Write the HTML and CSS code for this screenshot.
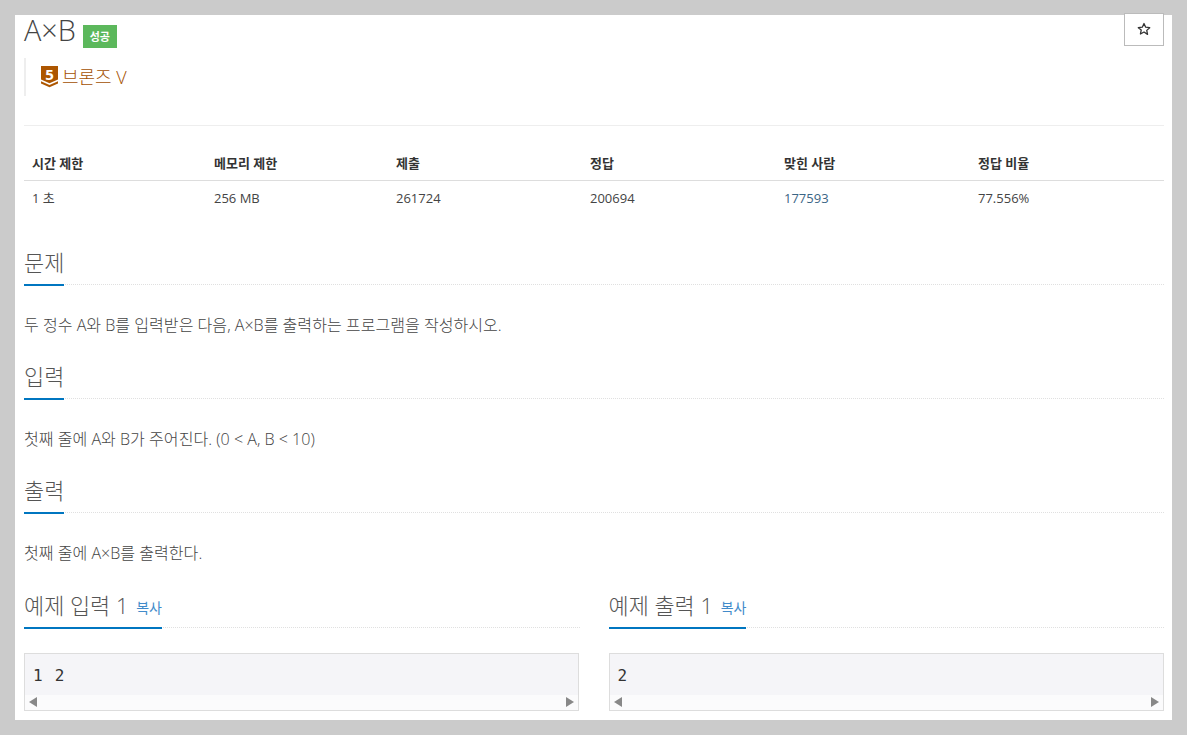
FILE: index.html
```html
<!DOCTYPE html>
<html lang="ko">
<head>
<meta charset="utf-8">
<title>A×B</title>
<link rel="stylesheet" href="styles.css">
</head>
<body>
<main class="sheet">
  <header class="title-row">
    <div class="title-group">
      <h1 class="title">A×B</h1>
      <span class="badge">성공</span>
    </div>
    <button class="star-btn" type="button" aria-label="star">
      <svg class="star" width="14" height="14" viewBox="0 0 24 24"><path d="M12 2.600l2.900 6.300 6.900.8-5.100 4.700 1.400 6.800L12 17.100l-6.100 3.400 1.400-6.800L2.200 9.700l6.900-.8z" fill="none" stroke="#333" stroke-width="2.200" stroke-linejoin="round"/></svg>
    </button>
  </header>
  <blockquote class="tier">
    <svg class="tier-icon" width="17" height="22" viewBox="0 0 17 22"><path d="M0 0h17v13.500l-8.500 3.700L0 13.500z" fill="#ad5600"/><path d="M0 15.200l8.500 3.700 8.500-3.700v2.400L8.500 21.300 0 17.600z" fill="#ad5600"/></svg>
    <span class="tier-num">5</span>
    <span class="tier-name">브론즈 V</span>
  </blockquote>
  <table class="info">
    <thead>
      <tr>
        <th class="c-narrow">시간 제한</th>
        <th class="c-narrow">메모리 제한</th>
        <th class="c-wide">제출</th>
        <th class="c-wide">정답</th>
        <th class="c-wide">맞힌 사람</th>
        <th class="c-wide">정답 비율</th>
      </tr>
    </thead>
    <tbody>
      <tr>
        <td>1 초</td>
        <td>256 MB</td>
        <td>261724</td>
        <td>200694</td>
        <td><a class="link" href="#">177593</a></td>
        <td>77.556%</td>
      </tr>
    </tbody>
  </table>
  <section class="sec">
    <div class="head"><h2 class="head-text">문제</h2></div>
    <p class="body-text">두 정수 A와 B를 입력받은 다음, A×B를 출력하는 프로그램을 작성하시오.</p>
  </section>
  <section class="sec">
    <div class="head"><h2 class="head-text">입력</h2></div>
    <p class="body-text">첫째 줄에 A와 B가 주어진다. (0 &lt; A, B &lt; 10)</p>
  </section>
  <section class="sec">
    <div class="head"><h2 class="head-text">출력</h2></div>
    <p class="body-text">첫째 줄에 A×B를 출력한다.</p>
  </section>
  <div class="samples">
    <section>
      <div class="head"><h2 class="head-text">예제 입력 1 <a class="copy" href="#">복사</a></h2></div>
      <div class="code-box">
        <pre class="code">1 2</pre>
        <div class="scroll"><span class="arrow-l"></span><span class="arrow-r"></span></div>
      </div>
    </section>
    <section>
      <div class="head"><h2 class="head-text">예제 출력 1 <a class="copy" href="#">복사</a></h2></div>
      <div class="code-box">
        <pre class="code">2</pre>
        <div class="scroll"><span class="arrow-l"></span><span class="arrow-r"></span></div>
      </div>
    </section>
  </div>
</main>
</body>
</html>
```

FILE: styles.css
```css
* { box-sizing: border-box; }
html, body { height: 100%; }
body {
  margin: 0;
  padding: 15px;
  background: #cbcbcb;
  overflow: hidden;
  font-family: "Open Sans", "Noto Sans CJK KR", sans-serif;
  color: #555;
  font-size: 16px;
}
.sheet {
  background: #fff;
  height: 705px;
  padding: 0 8px 0 9px;
}
.title-row {
  display: flex;
  justify-content: space-between;
  align-items: flex-start;
  height: 43px;
}
.title-group { display: flex; align-items: flex-start; }
.title {
  margin: -2px 0 0;
  font-size: 28.800px;
  font-weight: 300;
  line-height: 34px;
  color: #444;
}
.badge {
  margin: 10px 0 0 7px;
  width: 34px;
  height: 23px;
  background: #5cb85c;
  color: #fff;
  font-size: 11px;
  font-weight: 700;
  line-height: 23px;
  text-align: center;
}
.star-btn {
  margin-top: -2px;
  width: 40px;
  height: 33px;
  padding: 0 0 2px;
  display: flex;
  align-items: center;
  justify-content: center;
  background: #fff;
  border: 1px solid #bbb;
}
.tier {
  position: relative;
  margin: 0;
  height: 38px;
  padding-left: 15px;
  display: flex;
  align-items: center;
  gap: 4px;
  border-left: 2px solid #eee;
}
.tier-icon { flex: none; }
.tier-num {
  position: absolute;
  left: 15px;
  width: 17px;
  top: 9px;
  text-align: center;
  color: #fff;
  font-size: 15px;
  font-weight: 700;
  line-height: 15px;
  font-family: "Open Sans", sans-serif;
}
.tier-name { color: #a34f00; font-size: 18px; font-weight: 300; line-height: 24px; }
.info {
  width: 100%;
  margin-top: 29px;
  border-collapse: collapse;
  table-layout: fixed;
  border-top: 1px solid #eee;
  font-size: 13px;
  color: #333;
}
.c-narrow { width: 182px; }
.c-wide { width: 194px; }
.info th {
  height: 55px;
  padding: 18px 8px 0;
  text-align: left;
  font-weight: 700;
  color: #333;
  border-bottom: 1px solid #ddd;
}
.info td {
  height: 36px;
  padding: 0 8px 2px;
  color: #444;
}
.link { color: #3b6585; text-decoration: none; }
.head {
  border-bottom: 1px dotted #e0e0e0;
  height: 35px;
}
.head-text {
  display: inline-block;
  margin: 0;
  height: 36px;
  font-size: 21.900px;
  font-weight: 300;
  line-height: 25px;
  color: #555;
  border-bottom: 2px solid #0076c0;
}
.sec:first-of-type { margin-top: 33px; }
.body-text {
  margin: 0;
  height: 79px;
  padding-top: 30px;
  line-height: 20px;
  font-size: 16.070px;
  font-weight: 300;
  color: #444;
}
.samples {
  display: grid;
  grid-template-columns: 1fr 1fr;
  gap: 29px;
  padding-top: 1px;
}
.copy { font-size: 14px; font-weight: 400; color: #428bca; text-decoration: none; margin-left: 2px; vertical-align: 1px; }
.code-box {
  margin-top: 25px;
  height: 58px;
  width: 555px;
  border: 1px solid #ddd;
  background: #f5f5f8;
  display: flex;
  flex-direction: column;
}
.code {
  flex: 1;
  margin: 0;
  padding: 12px 8px 0;
  font-family: "DejaVu Sans Mono", monospace;
  font-size: 16px;
  letter-spacing: 1.200px;
  line-height: 20px;
  color: #333;
}
.scroll {
  height: 15px;
  background: #fbfbfc;
  display: flex;
  justify-content: space-between;
  align-items: center;
  padding: 0 4px;
}
.arrow-l, .arrow-r {
  width: 0;
  height: 0;
  border-top: 5px solid transparent;
  border-bottom: 5px solid transparent;
}
.arrow-l { border-right: 8px solid #888; }
.arrow-r { border-left: 8px solid #888; }
```
